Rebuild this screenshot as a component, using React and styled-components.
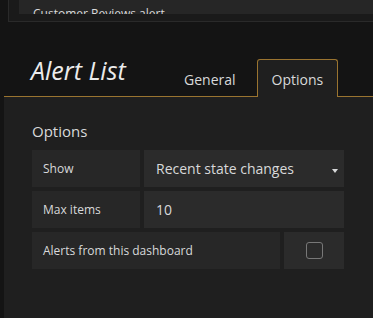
import React from "react";
import styled, { createGlobalStyle } from "styled-components";

const Global = createGlobalStyle`
  html, body { margin: 0; padding: 0; }
  body {
    background: #141414;
    font-family: "Open Sans", "Liberation Sans", sans-serif;
    color: #d8d9da;
    width: 373px;
    height: 318px;
    overflow: hidden;
  }
`;

const Page = styled.div`
  display: flex;
  flex-direction: column;
  width: 373px;
  height: 318px;
`;

const TopFrame = styled.div`
  margin-left: 8px;
  height: 21px;
  background: #1a1a1a;
  border-left: 1px solid #2a2a2a;
  border-bottom: 1px solid #2a2a2a;
  padding-left: 10px;
`;

const TopPanel = styled.div`
  height: 14px;
  background: #262626;
  overflow: hidden;
  padding-left: 14px;
`;

const TopText = styled.div`
  padding-top: 6px;
  font-size: 12px;
  line-height: 16px;
  color: #d8d9da;
  white-space: nowrap;
`;

const Header = styled.div`
  margin-left: 4px;
  height: 74px;
  display: flex;
  align-items: flex-end;
  border-bottom: 1px solid #9a7430;
`;

const Title = styled.h1`
  margin: 0;
  width: 165px;
  padding-left: 27px;
  box-sizing: border-box;
  align-self: flex-end;
  padding-bottom: 11px;
  font-size: 25px;
  line-height: 30px;
  font-weight: 400;
  font-style: italic;
  color: #ececec;
  white-space: nowrap;
`;

const Tabs = styled.div`
  display: flex;
  gap: 6px;
  align-items: flex-end;
`;

const Tab = styled.div`
  box-sizing: border-box;
  height: 38px;
  padding: 2px 14px 0;
  display: flex;
  align-items: center;
  font-size: 14px;
  color: #d8d9da;
  border: 1px solid ${(p) => (p.$active ? "#9a7430" : "transparent")};
  border-bottom: none;
  border-radius: 3px 3px 0 0;
  background: ${(p) => (p.$active ? "#1f1f1f" : "transparent")};
  margin-bottom: -1px;
`;

const Content = styled.div`
  flex: 1;
  margin-left: 4px;
  background: #1f1f1f;
  padding: 23px 0 0 28px;
`;

const SectionTitle = styled.h5`
  margin: 0 0 8px;
  font-size: 15px;
  line-height: 22px;
  font-weight: 400;
  color: #d8d9da;
`;

const Rows = styled.div`
  width: 312px;
  display: flex;
  flex-direction: column;
  gap: 4px;
`;

const Row = styled.div`
  display: grid;
  grid-template-columns: ${(p) => p.$cols};
  gap: 4px;
  height: 37px;
`;

const Label = styled.div`
  background: #272727;
  display: flex;
  align-items: center;
  padding-left: 11px;
  font-size: 12px;
  color: #d8d9da;
  white-space: nowrap;
`;

const Value = styled.div`
  position: relative;
  background: #2b2b2b;
  display: flex;
  align-items: center;
  padding-left: 12px;
  font-size: 14px;
  color: #d8d9da;
  white-space: nowrap;
`;

const Caret = styled.span`
  position: absolute;
  right: 6px;
  top: 50%;
  width: 0;
  height: 0;
  border-left: 3.5px solid transparent;
  border-right: 3.5px solid transparent;
  border-top: 4px solid #d8d9da;
`;

const CheckCell = styled.div`
  background: #2b2b2b;
  display: flex;
  align-items: center;
  justify-content: center;
`;

const CheckBox = styled.span`
  width: 15px;
  height: 15px;
  border: 1.5px solid #787878;
  border-radius: 3px;
`;

export default function App() {
  return (
    <Page>
      <Global />
      <TopFrame>
        <TopPanel>
          <TopText>Customer Reviews alert</TopText>
        </TopPanel>
      </TopFrame>
      <Header>
        <Title>Alert List</Title>
        <Tabs>
          <Tab>General</Tab>
          <Tab $active>Options</Tab>
        </Tabs>
      </Header>
      <Content>
        <SectionTitle>Options</SectionTitle>
        <Rows>
          <Row $cols="108px 1fr">
            <Label>Show</Label>
            <Value>
              Recent state changes
              <Caret />
            </Value>
          </Row>
          <Row $cols="108px 1fr">
            <Label>Max items</Label>
            <Value>10</Value>
          </Row>
          <Row $cols="1fr 60px">
            <Label>Alerts from this dashboard</Label>
            <CheckCell>
              <CheckBox />
            </CheckCell>
          </Row>
        </Rows>
      </Content>
    </Page>
  );
}
